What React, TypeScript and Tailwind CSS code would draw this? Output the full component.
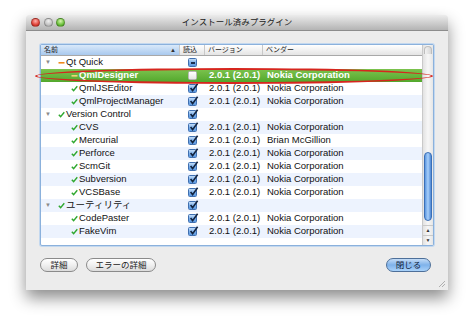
import type { ReactNode } from 'react'

type Row = {
  name: string
  depth: 0 | 1
  status: 'check' | 'dash'
  box: 'on' | 'off' | 'mixed'
  version?: string
  vendor?: string
  selected?: boolean
}

const rows: Row[] = [
  { name: 'Qt Quick', depth: 0, status: 'dash', box: 'mixed' },
  { name: 'QmlDesigner', depth: 1, status: 'dash', box: 'off', version: '2.0.1 (2.0.1)', vendor: 'Nokia Corporation', selected: true },
  { name: 'QmlJSEditor', depth: 1, status: 'check', box: 'on', version: '2.0.1 (2.0.1)', vendor: 'Nokia Corporation' },
  { name: 'QmlProjectManager', depth: 1, status: 'check', box: 'on', version: '2.0.1 (2.0.1)', vendor: 'Nokia Corporation' },
  { name: 'Version Control', depth: 0, status: 'check', box: 'on' },
  { name: 'CVS', depth: 1, status: 'check', box: 'on', version: '2.0.1 (2.0.1)', vendor: 'Nokia Corporation' },
  { name: 'Mercurial', depth: 1, status: 'check', box: 'on', version: '2.0.1 (2.0.1)', vendor: 'Brian McGillion' },
  { name: 'Perforce', depth: 1, status: 'check', box: 'on', version: '2.0.1 (2.0.1)', vendor: 'Nokia Corporation' },
  { name: 'ScmGit', depth: 1, status: 'check', box: 'on', version: '2.0.1 (2.0.1)', vendor: 'Nokia Corporation' },
  { name: 'Subversion', depth: 1, status: 'check', box: 'on', version: '2.0.1 (2.0.1)', vendor: 'Nokia Corporation' },
  { name: 'VCSBase', depth: 1, status: 'check', box: 'on', version: '2.0.1 (2.0.1)', vendor: 'Nokia Corporation' },
  { name: 'ユーティリティ', depth: 0, status: 'check', box: 'on' },
  { name: 'CodePaster', depth: 1, status: 'check', box: 'on', version: '2.0.1 (2.0.1)', vendor: 'Nokia Corporation' },
  { name: 'FakeVim', depth: 1, status: 'check', box: 'on', version: '2.0.1 (2.0.1)', vendor: 'Nokia Corporation' },
]

const font = "font-['Liberation_Sans','Noto_Sans_CJK_JP',sans-serif]"

function StatusIcon({ kind, selected }: { kind: Row['status']; selected?: boolean }) {
  if (kind === 'dash') {
    return (
      <svg width="7" height="7" viewBox="0 0 7 7">
        <rect x="0.5" y="3" width="6" height="1.6" fill={selected ? '#f3d27a' : '#f08a1c'} />
      </svg>
    )
  }
  return (
    <svg width="7" height="7" viewBox="0 0 7 7">
      <path d="M0.8 3.8 L2.6 5.6 L6.3 1.2" fill="none" stroke="#2fa82f" strokeWidth="1.4" />
    </svg>
  )
}

function Checkbox({ state }: { state: Row['box'] }) {
  if (state === 'off') {
    return <div className="h-[9px] w-[9px] rounded-[1.5px] border border-[#b8b8b8] bg-gradient-to-b from-white to-[#e6e6e6]" />
  }
  return (
    <div className="relative h-[9px] w-[9px] rounded-[1.5px] border border-[#3f6fb0] bg-gradient-to-b from-[#c2dcf7] via-[#7db0ea] to-[#5b98e0]">
      {state === 'mixed' ? (
        <div className="absolute left-[1.5px] top-[3px] h-[1.5px] w-[4px] bg-[#1a2f50]" />
      ) : (
        <svg className="absolute -top-[2px] left-0" width="10" height="10" viewBox="0 0 10 10">
          <path d="M1.6 5 L3.6 7.6 L8.6 0.8" fill="none" stroke="#12233f" strokeWidth="1.6" />
        </svg>
      )}
    </div>
  )
}

function HeaderCell({ children, className }: { children: ReactNode; className?: string }) {
  return (
    <div className={`flex h-full items-center border-r border-[#c8c8c8] pl-[3px] text-[7px] text-[#222] ${className ?? ''}`}>
      {children}
    </div>
  )
}

function Light({ className }: { className: string }) {
  return <div className={`h-[9px] w-[9px] rounded-full border border-black/25 ${className}`} />
}

function PillButton({ children, primary, className }: { children: ReactNode; primary?: boolean; className?: string }) {
  return (
    <div
      className={`flex h-[14px] items-center justify-center rounded-full border text-[8.5px] ${
        primary
          ? 'border-[#4d6f99] bg-gradient-to-b from-[#c4dcf6] via-[#7fb2ea] to-[#a9d2fa] text-[#10223a]'
          : 'border-[#8a8a8a] bg-gradient-to-b from-white via-[#f0f0f0] to-[#dcdcdc] text-[#222]'
      } ${className ?? ''}`}
    >
      {children}
    </div>
  )
}

export default function App() {
  return (
    <div className={`h-[325px] w-[474px] overflow-hidden bg-white pl-[26px] pt-[15px] ${font}`}>
      <div className="relative h-[275px] w-[422px] overflow-hidden rounded-t-[4px] bg-[#ececec] shadow-[0_8px_16px_rgba(0,0,0,0.45)]">
        {/* title bar */}
        <div className="relative flex h-[16px] items-center border-b border-[#8c8c8c] bg-gradient-to-b from-[#ececec] to-[#b4b4b4] px-[5px]">
          <div className="flex gap-[3.5px]">
            <Light className="bg-[radial-gradient(circle_at_50%_30%,#ffb3ae,#e0443a_60%,#a81d14)]" />
            <Light className="bg-[radial-gradient(circle_at_50%_30%,#f0f0f0,#c4c4c4_60%,#9a9a9a)]" />
            <Light className="bg-[radial-gradient(circle_at_50%_30%,#d8f5b0,#6ec23e_60%,#3d8a1a)]" />
          </div>
          <div className="absolute inset-x-0 top-0 flex h-full items-center justify-center text-[8.5px] text-[#222]">
            インストール済みプラグイン
          </div>
        </div>

        {/* body */}
        <div className="px-[14px] pt-[13px]">
          <div className="flex h-[202px] rounded-[2px] border border-[#8bb1dc] bg-white shadow-[0_0_0_1px_#c3d8ef]">
            <div className="flex flex-1 flex-col overflow-hidden">
              {/* header */}
              <div className="flex h-[11px] shrink-0 border-b border-[#a8a8a8] bg-gradient-to-b from-white to-[#e4e4e4]">
                <HeaderCell className="w-[139px] justify-between bg-gradient-to-b from-[#d9e9fa] to-[#a9c9ee] pr-[3px]">
                  <span>名前</span>
                  <span className="text-[6px] text-[#333]">▲</span>
                </HeaderCell>
                <HeaderCell className="w-[25px]">読込</HeaderCell>
                <HeaderCell className="w-[58px]">バージョン</HeaderCell>
                <HeaderCell className="flex-1 border-r-0">ベンダー</HeaderCell>
              </div>
              {/* rows */}
              <div className="flex flex-col">
                {rows.map((r, i) => (
                  <div
                    key={r.name}
                    className={`flex h-[13px] items-center text-[9.5px] ${
                      r.selected
                        ? 'bg-gradient-to-b from-[#7cc34e] to-[#52a82c] font-bold text-white'
                        : i % 2 === 1
                          ? 'bg-[#edf3fe] text-[#111]'
                          : 'bg-white text-[#111]'
                    }`}
                  >
                    <div className={`flex w-[139px] items-center ${r.depth === 0 ? 'pl-[4px]' : 'pl-[30px]'}`}>
                      {r.depth === 0 && <span className="mr-[6px] w-[7px] text-[6px] text-[#8a8a8a]">▼</span>}
                      <StatusIcon kind={r.status} selected={r.selected} />
                      <span className="ml-[1px] whitespace-nowrap">{r.name}</span>
                    </div>
                    <div className="flex w-[25px] justify-center">
                      <Checkbox state={r.box} />
                    </div>
                    <div className="w-[58px] whitespace-nowrap pl-[4px]">{r.version}</div>
                    <div className="flex-1 whitespace-nowrap pl-[4px]">{r.vendor}</div>
                  </div>
                ))}
              </div>
            </div>

            {/* scrollbar */}
            <div className="flex w-[11px] shrink-0 flex-col border-l border-[#c9c9c9] bg-gradient-to-r from-[#e2e2e2] via-[#f7f7f7] to-[#e6e6e6]">
              <div className="mx-auto mt-[1px] h-[8px] w-[8px] rounded-t-full border border-b-0 border-[#bdbdbd] bg-gradient-to-r from-[#f2f2f2] to-[#d8d8d8]" />
              <div className="h-[98px]" />
              <div className="mx-auto h-[69px] w-[8px] rounded-full border border-[#3b6fb6] bg-gradient-to-r from-[#5c97e0] via-[#a9d0fa] to-[#4b86d4]" />
              <div className="flex-1" />
              <div className="flex h-[10px] items-center justify-center border-t border-[#c9c9c9] text-[5px] text-[#333]">▲</div>
              <div className="flex h-[10px] items-center justify-center border-t border-[#c9c9c9] text-[5px] text-[#333]">▼</div>
            </div>
          </div>

          {/* buttons */}
          <div className="mt-[12px] flex items-center">
            <PillButton className="w-[38px]">詳細</PillButton>
            <PillButton className="ml-[8px] w-[70px]">エラーの詳細</PillButton>
            <div className="flex-1" />
            <PillButton primary className="mr-[3px] w-[45px]">閉じる</PillButton>
          </div>
        </div>

        {/* red highlight ellipse */}
        <div className="absolute left-[9px] top-[53px] h-[16px] w-[398px] rounded-[50%] border-[2.5px] border-[#d6261e]" />

        {/* resize grip */}
        <svg className="absolute bottom-[2px] right-[2px]" width="9" height="9" viewBox="0 0 9 9">
          <path d="M8 2 L2 8 M8 5 L5 8" stroke="#a0a0a0" strokeWidth="0.8" />
        </svg>
      </div>
    </div>
  )
}
